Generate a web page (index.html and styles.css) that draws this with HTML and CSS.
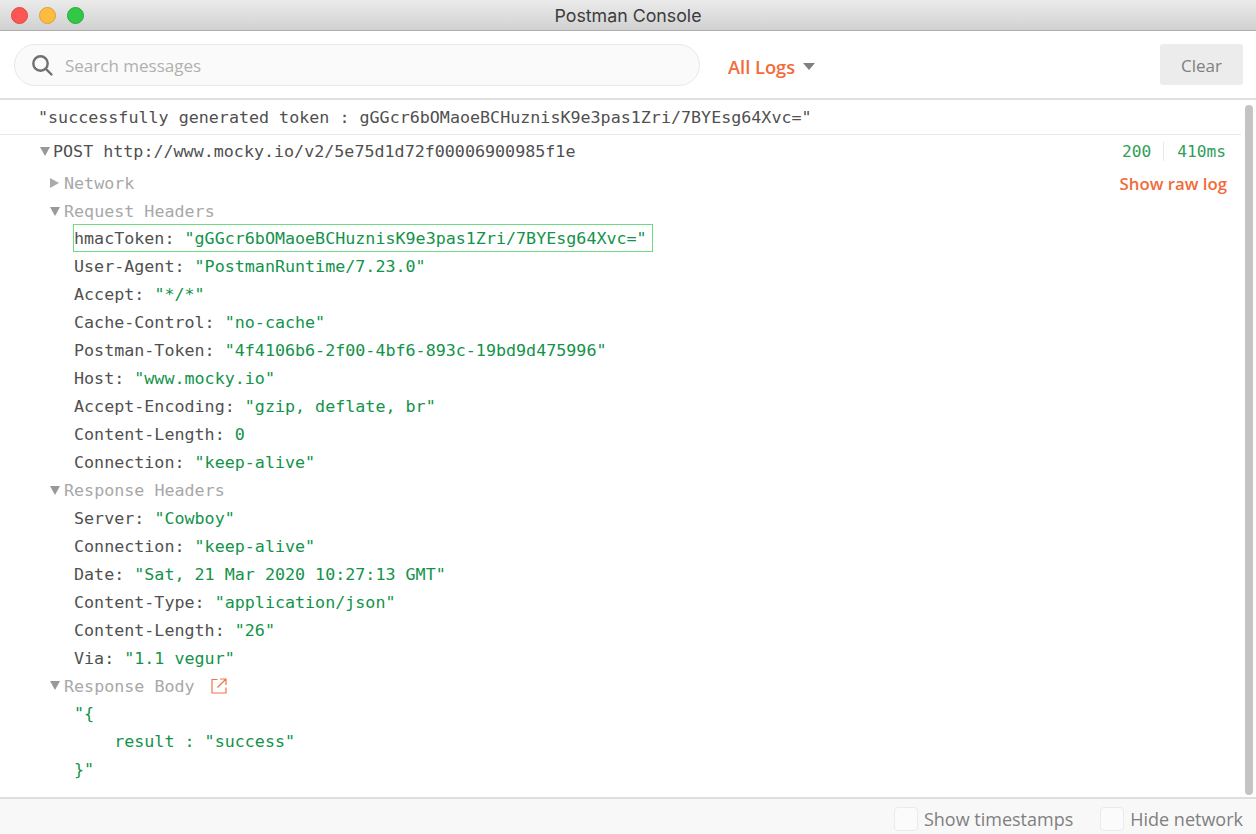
FILE: index.html
```html
<!DOCTYPE html>
<html lang="en">
<head>
    <meta charset="UTF-8">
    <meta name="viewport" content="width=device-width, initial-scale=1.0">
    <title>Postman Console</title>
    <link rel="stylesheet" href="styles.css">
</head>
<body>
<div class="titlebar">
    <div class="lights">
        <span class="light red"></span>
        <span class="light yellow"></span>
        <span class="light green"></span>
    </div>
    <div class="title">Postman Console</div>
</div>

<div class="toolbar">
    <div class="search">
        <svg width="24" height="24" viewBox="0 0 24 24" fill="none" stroke="#707070" stroke-width="2.4">
            <circle cx="10.5" cy="10.5" r="7.2"/>
            <path d="M15.8 15.8 L21.5 21.5" stroke-linecap="round"/>
        </svg>
        <span class="placeholder">Search messages</span>
    </div>
    <div class="filter">All Logs <span class="caret"></span></div>
    <button class="clear-btn">Clear</button>
</div>

<div class="console">
    <div class="scrollbar"></div>
    <div class="message">"successfully generated token : gGGcr6bOMaoeBCHuznisK9e3pas1Zri/7BYEsg64Xvc="</div>

    <div class="request-row">
        <div class="tri tri-down dark"></div>
        <div class="request-url">POST http://www.mocky.io/v2/5e75d1d72f00006900985f1e</div>
        <div class="status"><span class="code">200</span><span>410ms</span></div>
    </div>

    <div class="section-row low">
        <div class="tri tri-right"></div>
        <div class="section-name">Network</div>
        <a class="raw-link">Show raw log</a>
    </div>

    <div class="section-row low">
        <div class="tri tri-down"></div>
        <div class="section-name">Request Headers</div>
    </div>
    <div class="line highlight">hmacToken: <span class="val">"gGGcr6bOMaoeBCHuznisK9e3pas1Zri/7BYEsg64Xvc="</span></div>
    <div class="line">User-Agent: <span class="val">"PostmanRuntime/7.23.0"</span></div>
    <div class="line">Accept: <span class="val">"*/*"</span></div>
    <div class="line">Cache-Control: <span class="val">"no-cache"</span></div>
    <div class="line">Postman-Token: <span class="val">"4f4106b6-2f00-4bf6-893c-19bd9d475996"</span></div>
    <div class="line">Host: <span class="val">"www.mocky.io"</span></div>
    <div class="line">Accept-Encoding: <span class="val">"gzip, deflate, br"</span></div>
    <div class="line">Content-Length: <span class="val">0</span></div>
    <div class="line">Connection: <span class="val">"keep-alive"</span></div>

    <div class="section-row">
        <div class="tri tri-down"></div>
        <div class="section-name">Response Headers</div>
    </div>
    <div class="line">Server: <span class="val">"Cowboy"</span></div>
    <div class="line">Connection: <span class="val">"keep-alive"</span></div>
    <div class="line">Date: <span class="val">"Sat, 21 Mar 2020 10:27:13 GMT"</span></div>
    <div class="line">Content-Type: <span class="val">"application/json"</span></div>
    <div class="line">Content-Length: <span class="val">"26"</span></div>
    <div class="line">Via: <span class="val">"1.1 vegur"</span></div>

    <div class="section-row short">
        <div class="tri tri-down"></div>
        <div class="section-name">Response Body</div>
        <svg class="open-icon" width="16" height="16" viewBox="0 0 16 16" fill="none" stroke="#f0734a" stroke-width="1.2">
            <path d="M6.5 1.5 H1 V15 H15 V9.5"/>
            <path d="M6.5 9.5 L14.5 1.5 M9 1 H15 V7"/>
        </svg>
    </div>
    <div class="line val">"{</div>
    <div class="line val">    result : "success"</div>
    <div class="line val">}"</div>
</div>

<div class="footer">
    <label class="check"><span class="box"></span>Show timestamps</label>
    <label class="check"><span class="box"></span>Hide network</label>
</div>
</body>
</html>
```

FILE: styles.css
```css
* {
    margin: 0;
    padding: 0;
    box-sizing: border-box;
}
html, body {
    height: 100%;
    overflow: hidden;
}
body {
    display: flex;
    flex-direction: column;
    background-color: #fff;
    font-family: "Open Sans", sans-serif;
}

/* title bar */
.titlebar {
    height: 31px;
    flex: none;
    display: flex;
    align-items: center;
    justify-content: center;
    position: relative;
    background: linear-gradient(to bottom, #ebebeb, #d2d1d2);
    border-bottom: 1px solid #adadad;
}
.lights {
    position: absolute;
    left: 11px;
    top: 7px;
    display: flex;
    gap: 11px;
}
.light {
    width: 17px;
    height: 17px;
    border-radius: 50%;
}
.red { background-color: #fc5753; border: 1px solid #df4744; }
.yellow { background-color: #fdbc40; border: 1px solid #de9f34; }
.green { background-color: #33c748; border: 1px solid #27aa35; }
.title {
    font-family: "Inter", sans-serif;
    font-size: 17.8px;
    color: #3c3c3c;
    margin-top: 1px;
}

/* search bar */
.toolbar {
    height: 69px;
    flex: none;
    display: flex;
    align-items: center;
    padding: 0 13px 0 14px;
    border-bottom: 2px solid #e0e0e0;
}
.search {
    width: 686px;
    height: 42px;
    display: flex;
    align-items: center;
    gap: 11px;
    padding-left: 15px;
    background-color: #fafafa;
    border: 1px solid #e8e8e8;
    border-radius: 21px;
}
.placeholder {
    font-size: 17px;
    color: #b0b0b0;
    margin-top: 2px;
}
.filter {
    margin-left: 28px;
    display: flex;
    align-items: center;
    gap: 8px;
    font-size: 18.3px;
    font-weight: 600;
    color: #f26b3a;
    margin-top: 3px;
}
.caret {
    width: 0;
    height: 0;
    border-left: 6px solid transparent;
    border-right: 6px solid transparent;
    border-top: 7px solid #808080;
}
.clear-btn {
    margin-left: auto;
    width: 83px;
    height: 41px;
    border: 0;
    border-radius: 3px;
    padding-top: 2px;
    background-color: #ececec;
    color: #808080;
    font-family: "Open Sans", sans-serif;
    font-size: 17px;
}

/* log area */
.console {
    flex: 1;
    position: relative;
    font-family: "DejaVu Sans Mono", monospace;
    font-size: 16.7px;
    color: #505050;
    overflow: hidden;
}
.scrollbar {
    position: absolute;
    right: 3px;
    top: 5px;
    width: 8px;
    height: 690px;
    border-radius: 4px;
    background-color: #c4c4c4;
}
.message {
    height: 35px;
    line-height: 34px;
    padding-left: 38px;
    margin-right: 15px;
    border-bottom: 1px solid #e8e8e8;
    white-space: pre;
}
.request-row {
    height: 33px;
    display: flex;
    align-items: center;
    padding: 0 30px 1px 40px;
}
.request-url {
    margin-left: 3px;
}
.status {
    margin-left: auto;
    display: flex;
    color: #2f9e58;
    font-size: 16.2px;
}
.code {
    padding-right: 12px;
    margin-right: 13px;
    border-right: 1px solid #e8e8e8;
}
.section-row {
    height: 28px;
    display: flex;
    align-items: center;
    padding-left: 50px;
    padding-right: 29px;
    color: #a8a8a8;
}
.section-row.low {
    padding-top: 2px;
}
.section-row.short {
    height: 27px;
}
.section-name {
    margin-left: 4px;
}
.raw-link {
    margin-left: auto;
    font-family: "Open Sans", sans-serif;
    font-size: 16.8px;
    font-weight: 600;
    color: #f26b3a;
}
.open-icon {
    margin-left: 16px;
}
.tri {
    width: 0;
    height: 0;
    flex: none;
}
.tri-down {
    border-left: 5px solid transparent;
    border-right: 5px solid transparent;
    border-top: 9px solid #999;
}
.tri-right {
    border-top: 5px solid transparent;
    border-bottom: 5px solid transparent;
    border-left: 9px solid #aaa;
    margin-right: 1px;
}
.line {
    height: 28px;
    line-height: 28px;
    margin-left: 74px;
    white-space: pre;
}
.val {
    color: #13934a;
}
.highlight {
    width: 580px;
    margin-left: 73px;
    padding-left: 0;
    border: 1px solid #6fdc83;
    line-height: 26px;
}

/* bottom bar */
.footer {
    height: 37px;
    flex: none;
    display: flex;
    justify-content: flex-end;
    align-items: center;
    gap: 27px;
    padding: 5px 13px 0 0;
    background-color: #f8f8f8;
    border-top: 2px solid #dedede;
    font-size: 18px;
    color: #808080;
}
.check {
    display: flex;
    align-items: center;
    gap: 6px;
}
.box {
    flex: none;
    width: 24px;
    height: 24px;
    background-color: #fbfbfb;
    border: 1px solid #ebebeb;
    border-radius: 4px;
}
```
